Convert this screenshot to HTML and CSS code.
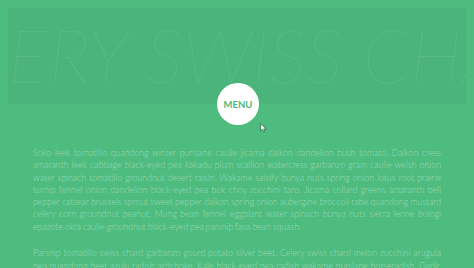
FILE: index.html
```html
<!DOCTYPE html>
<html lang="en">
<head>
<meta charset="utf-8">
<title>Celery Swiss Chard</title>
<link rel="stylesheet" href="styles.css">
</head>
<body>
<header class="hero">
  <h1 class="hero-title"><span class="hero-text">ERY SWISS CHARD</span></h1>
  <button class="menu-btn">MENU</button>
  <svg class="cursor" width="7" height="10" viewBox="0 0 7 10"><path d="M0.5 0.5 L0.5 8 L2.4 6.3 L3.8 9.3 L5 8.8 L3.7 5.9 L6.2 5.9 Z" fill="#ffffff" stroke="#2f6e4a" stroke-width="0.8" stroke-linejoin="round"/></svg>
</header>
<main class="content">
  <p class="para">Soko leek tomatillo quandong winter purslane caulie jicama daikon dandelion bush tomato. Daikon cress amaranth leek cabbage black-eyed pea kakadu plum scallion watercress garbanzo gram caulie welsh onion water spinach tomatillo groundnut desert raisin. Wakame salsify bunya nuts spring onion lotus root prairie turnip fennel onion dandelion black-eyed pea bok choy zucchini taro. Jicama collard greens amaranth bell pepper catsear brussels sprout sweet pepper daikon spring onion aubergine broccoli rabe quandong mustard celery corn groundnut peanut. Mung bean fennel eggplant water spinach bunya nuts sierra leone bologi epazote okra caulie groundnut black-eyed pea parsnip fava bean squash.</p>
  <p class="para">Parsnip tomatillo swiss chard garbanzo gourd potato silver beet. Celery swiss chard melon zucchini arugula pea quandong beet azuki radish artichoke. Kale black-eyed pea radish wakame purslane horseradish. Garlic chickweed okra sorrel turnip greens kohlrabi corn salad lentil celtuce.</p>
</main>
</body>
</html>
```
FILE: styles.css
```css
html, body {
  background: #4fbc7f;
}
body {
  margin: 8px;
  overflow: hidden;
  font-family: "Lato", "Liberation Sans", sans-serif;
}
.hero {
  position: relative;
  height: 96px;
  margin-right: -8px;
  background: #4bb47a;
}
.hero-title {
  margin: 0;
  padding-top: 9px;
  font-size: 75px;
  line-height: 75px;
  font-weight: 100;
  font-style: italic;
  white-space: nowrap;
  overflow: hidden;
  color: rgba(255, 255, 255, 0.09);
}
.hero-text {
  display: inline-block;
  margin-left: 0;
}
.menu-btn {
  position: absolute;
  left: 209px;
  bottom: -21px;
  width: 42px;
  height: 42px;
  border: none;
  border-radius: 50%;
  background: #ffffff;
  color: #4fb87e;
  font-family: "Lato", "Liberation Sans", sans-serif;
  font-weight: 700;
  font-size: 9.5px;
  padding: 0;
  text-align: center;
}
.cursor {
  position: absolute;
  left: 252px;
  top: 115px;
}
.content {
  width: 408px;
  margin: 0 auto;
  padding-top: 43px;
}
.para {
  margin: 0 0 14.3px;
  font-size: 8.8px;
  line-height: 12.3px;
  font-weight: 300;
  word-spacing: -0.6px;
  text-align: justify;
  color: rgba(255, 255, 255, 0.42);
}
```
